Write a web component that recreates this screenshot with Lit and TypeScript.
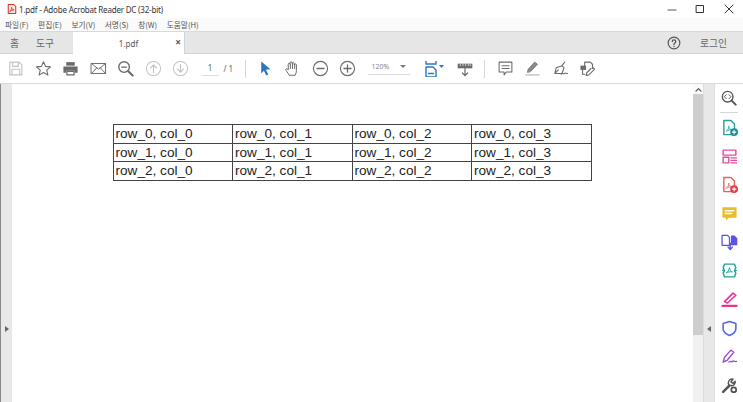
import { LitElement, html, css, svg } from 'lit';
import { customElement } from 'lit/decorators.js';

const icon = (w: number, h: number, body: unknown, vb = '0 0 24 24') => html`
    <svg width=${w} height=${h} viewBox=${vb} fill="none" stroke-linecap="round" stroke-linejoin="round">${body}</svg>
`;

const GREY = '#6b6b6b';
const PALE = '#c4c4c4';

const toolsLeft = [
    svg`<path d="M4 3h13l4 4v14H4z M8 3v6h8V3 M7 21v-8h11v8" stroke=${PALE} stroke-width="1.600"/>`,
    svg`<path d="M12 2.500l2.900 6.500 7 .7-5.300 4.700 1.600 7-6.200-3.700-6.200 3.700 1.600-7L2.100 9.700l7-.7z" stroke=${GREY} stroke-width="1.500"/>`,
    svg`<path d="M6 3h12v5H6z" fill=${GREY}/><path d="M2 9h20v9h-4v-3H6v3H2z" fill=${GREY}/><path d="M7 16h10v5H7z" stroke=${GREY} stroke-width="1.800"/>`,
    svg`<path d="M2 5h20v14H2z M2 5l10 8 10-8 M2 19l7.500-8 M22 19l-7.500-8" stroke=${GREY} stroke-width="1.400"/>`,
    svg`<circle cx="10" cy="10" r="7.500" stroke=${GREY} stroke-width="2"/><path d="M16 16l6 6" stroke=${GREY} stroke-width="3"/><path d="M6.500 10h7" stroke=${GREY} stroke-width="1.800"/>`,
    svg`<circle cx="12" cy="12" r="10" stroke=${PALE} stroke-width="1.500"/><path d="M12 18V7 M7.500 11.500L12 7l4.500 4.500" stroke=${PALE} stroke-width="1.600"/>`,
    svg`<circle cx="12" cy="12" r="10" stroke=${PALE} stroke-width="1.500"/><path d="M12 6v11 M7.500 12.500L12 17l4.500-4.500" stroke=${PALE} stroke-width="1.600"/>`,
];

const toolsNav = [
    svg`<path d="M6 2l13 11-6.500.6 3.500 7-3 1.400-3.200-7L6 19z" fill="#2d74c4"/>`,
    svg`<path d="M7 21c-1-3-5-6-4.500-8 .5-1.500 2.500-.5 3.500 1V6c0-2 2.500-2 2.500 0V4c0-2 3-2 3 0v1c0-2 3-2 3 0v2c0-2 3-2 3 0v8c0 3-1 4-1.500 6z M9 6v6 M12 5v7 M15 7v5" stroke=${GREY} stroke-width="1.400"/>`,
    svg`<circle cx="12" cy="12" r="10" stroke=${GREY} stroke-width="1.600"/><path d="M7 12h10" stroke=${GREY} stroke-width="1.800"/>`,
    svg`<circle cx="12" cy="12" r="10" stroke=${GREY} stroke-width="1.600"/><path d="M7 12h10 M12 7v10" stroke=${GREY} stroke-width="1.800"/>`,
];

const toolsMark = [
    svg`<path d="M3 3h18v14h-8l-3 4v-4H3z M7 8h10 M7 12h10" stroke=${GREY} stroke-width="1.500"/>`,
    svg`<path d="M5 17l1-4L15 3l4 3-9.500 10z" fill="#8c8c8c" stroke=${GREY} stroke-width="1.200"/><path d="M3 21h18" stroke="#cfcfcf" stroke-width="2.500"/>`,
    svg`<path d="M4 19l2-8 8-3 3 3-3 8z M4 19l5-5 M14 8l4-5 M13 20c3-3 3 1 5-1s1 1 4 0" stroke=${GREY} stroke-width="1.500"/>`,
    svg`<path d="M8 11V3h8l3 3v6 M19 10l3 3-8 8-4 1 1-4 6-6 M8 20H5v-6" stroke=${GREY} stroke-width="1.500"/><path d="M2 8h8v6H2z" fill=${GREY}/>`,
];

const doc = (c: string) => svg`<path d="M4 2h10l5 5v15H4z" stroke=${c} stroke-width="2"/><path d="M8 17c2-1 3-4 3-7 0 3 2 5 5 5-3 0-6 1-8 2z" stroke=${c} stroke-width="1.200"/>`;

const sideTools = [
    svg`${doc('#26a0a0')}<circle cx="18.500" cy="18.500" r="5.500" fill="#138f96"/><path d="M16 18.500h5 M18.500 16v5" stroke="#fff" stroke-width="1.500"/>`,
    svg`<path d="M3 3h18v7H3z M3 13h8v8H3z" stroke="#e64b9e" stroke-width="2"/><path d="M14 14h8 M14 17.500h8 M14 21h8" stroke="#e64b9e" stroke-width="1.600"/>`,
    svg`${doc('#ec5f5f')}<circle cx="18.500" cy="18.500" r="5.500" fill="#e63946"/><path d="M16 18.500h5 M18.500 16v5" stroke="#fff" stroke-width="1.500"/>`,
    svg`<path d="M2 3h20v15H11l-4 4v-4H2z" fill="#e8bd2c"/><path d="M6 8h12 M6 12h9" stroke="#fff" stroke-width="2"/>`,
    svg`<path d="M1.500 2h8l2.500 3v11H1.500z" stroke="#5a55e0" stroke-width="1.800"/><path d="M14 2h5l4 4v10H14z" fill="#5a55e0"/><path d="M13 13v8 M10 18.500l3 3.500 3-3.500" stroke="#5a55e0" stroke-width="2"/>`,
    svg`<path d="M5 3h14l2 5-2 4 2 4-2 5H5l-2-5 2-4-2-4z" stroke="#1fa39c" stroke-width="2"/><path d="M8 15c2-1 3-3 4-7 0 3 2 5 4 6-3-.5-6 0-8 1z" stroke="#1fa39c" stroke-width="1.400"/><path d="M1 12l3-2v4z M23 12l-3-2v4z" fill="#1fa39c"/>`,
    svg`<path d="M5 15L17 3l4 3-12 11z" stroke="#e6358f" stroke-width="2.200"/><path d="M2 21h20" stroke="#e6358f" stroke-width="3"/>`,
    svg`<path d="M12 2l9 3v7c0 5-4 8-9 10-5-2-9-5-9-10V5z" stroke="#5566e6" stroke-width="2.200"/>`,
    svg`<path d="M3 20l2-7 9-10 4 3-9 11z M3 20l4-2" stroke="#9b4fd8" stroke-width="2"/><path d="M11 20c3-3 3 1 5-1s2 1 6 0" stroke="#9b4fd8" stroke-width="1.800"/>`,
    svg`<path d="M3 21l9-9" stroke="#555" stroke-width="3.500"/><path d="M11 11c-2-4 1-9 6-8l-3 4 3 2 3-3c1 4-3 7-6 6" stroke="#555" stroke-width="2"/><circle cx="18" cy="18" r="3.500" stroke="#555" stroke-width="2.500"/>`,
];

const rows = [0, 1, 2];
const cols = [0, 1, 2, 3];

@customElement('app-root')
export class AppRoot extends LitElement {
    static styles = css`
        :host {
            display: flex;
            flex-direction: column;
            height: 402px;
            width: 743px;
            overflow: hidden;
            background: #fff;
            font-family: "Noto Sans CJK KR", "Noto Sans", sans-serif;
            color: #444;
        }

        svg { display: block; }

        .title {
            height: 18px;
            display: flex;
            align-items: center;
            padding-left: 7px;
            gap: 2px;
            font-family: "Noto Sans", sans-serif;
            font-size: 8px;
            letter-spacing: -0.2px;
            color: #333;
        }

        .title .name { flex: 1; }

        .winbtn {
            width: 28.500px;
            display: flex;
            justify-content: center;
        }

        .winbtns { display: flex; }

        .menu {
            height: 13px;
            background: #fafafa;
            display: flex;
            align-items: center;
            gap: 9.500px;
            padding-left: 5px;
            font-size: 7.700px;
            color: #555;
            border-bottom: 1px solid #d9d9d9;
        }

        .tabs {
            height: 21px;
            background: #e6e6e6;
            display: flex;
            align-items: stretch;
            border-bottom: 1px solid #d4d4d4;
            font-size: 9.800px;
            color: #666;
        }

        .tabs .nav {
            width: 73px;
            display: flex;
            align-items: center;
            padding-left: 10px;
            gap: 17px;
            box-sizing: border-box;
        }

        .tab {
            width: 112px;
            background: #fff;
            margin-bottom: -1px;
            display: flex;
            align-items: center;
            justify-content: center;
            position: relative;
            font-family: "Noto Sans", sans-serif;
            font-size: 8px;
            color: #555;
            border-right: 1px solid #d4d4d4;
            box-sizing: border-box;
        }

        .tab .close {
            position: absolute;
            right: 3px;
            top: 3px;
            font-size: 10px;
            font-weight: 700;
        }

        .tabs .right {
            margin-left: auto;
            display: flex;
            align-items: center;
            gap: 19px;
            padding-right: 16px;
        }

        .toolbar {
            height: 29px;
            display: flex;
            align-items: center;
            padding-left: 2px;
            border-bottom: 1px solid #dcdcdc;
        }

        .tool {
            width: 27.500px;
            display: flex;
            justify-content: center;
        }

        .tool.fit { margin-left: 11.500px; margin-right: -2px; }
        .tool.ruler { margin-left: 4.800px; }

        .page {
            width: 50px;
            display: flex;
            align-items: center;
            font-family: "Noto Sans", sans-serif;
            font-size: 8px;
            color: #666;
        }

        .page .num {
            width: 17px;
            margin-left: 7px;
            margin-right: 5px;
            text-align: center;
            border-bottom: 1px solid #ddd;
            padding-bottom: 2px;
        }

        .sep {
            width: 1px;
            height: 18px;
            background: #d6d6d6;
        }

        .sep.nav { margin: 0 6px 0 0; }
        .sep.mark { margin: 0 6px 0 5.700px; }

        .zoomval {
            width: 42px;
            margin-left: 6px;
            display: flex;
            justify-content: space-between;
            align-items: center;
            font-family: "Noto Sans", sans-serif;
            font-size: 7px;
            color: #888;
            border-bottom: 1px solid #ddd;
            padding: 0 4px 3px 4px;
            box-sizing: border-box;
        }

        .caret {
            width: 0;
            height: 0;
            border-left: 3px solid transparent;
            border-right: 3px solid transparent;
            border-top: 3px solid #777;
        }

        .body {
            flex: 1;
            display: grid;
            grid-template-columns: 12px 681px 10px 12px 28px;
            min-height: 0;
        }

        .strip {
            background: #e8e8e8;
            display: flex;
            align-items: center;
            justify-content: center;
            padding-top: 172px;
            box-sizing: border-box;
        }

        .strip.left {
            border-left: 1px solid #8a8a8a;
        }

        .strip.mid {
            border-left: 1px solid #dcdcdc;
            border-right: 1px solid #dcdcdc;
        }

        .arrow-r {
            border-left: 4px solid #666;
            border-top: 3.500px solid transparent;
            border-bottom: 3.500px solid transparent;
        }

        .arrow-l {
            border-right: 4px solid #666;
            border-top: 3.500px solid transparent;
            border-bottom: 3.500px solid transparent;
        }

        .doc {
            padding: 40px 0 0 100.500px;
            box-sizing: border-box;
        }

        table {
            border-collapse: collapse;
            table-layout: fixed;
            width: 479px;
            font-family: "Liberation Sans", Arial, sans-serif;
            font-size: 13.600px;
            color: #222;
        }

        td {
            border: 1px solid #444;
            padding: 0 0 0 2px;
            height: 17.500px;
            line-height: 17px;
            white-space: nowrap;
        }

        .scroll {
            background: #f0f0f0;
            display: flex;
            flex-direction: column;
        }

        .scroll .up {
            height: 10px;
            background: #fafafa;
            display: flex;
            align-items: center;
            justify-content: center;
        }

        .scroll .thumb {
            height: 241px;
            background: #cdcdcd;
        }

        .side {
            display: flex;
            flex-direction: column;
            align-items: center;
            padding-top: 6px;
        }

        .side .divider {
            width: 18px;
            height: 1px;
            background: #d6d6d6;
            margin: 6px 0 0;
        }

        .side .item {
            height: 28.700px;
            display: flex;
            align-items: center;
        }
    `;

    render() {
        return html`
            <div class="title">
                ${icon(10, 10, svg`<path d="M3 1h13l5 5v17H3z" fill="#fde4e0" stroke="#d8362a" stroke-width="2.500"/><path d="M7 18c3-2 4-6 4-10 0 4 3 6 6 6-4 0-7 2-10 4z" stroke="#d8362a" stroke-width="2"/>`)}
                <span class="name">1.pdf - Adobe Acrobat Reader DC (32-bit)</span>
                <div class="winbtns">
                    <div class="winbtn">${icon(10, 10, svg`<path d="M1 6h8" stroke="#555" stroke-width="1"/>`, '0 0 10 10')}</div>
                    <div class="winbtn">${icon(10, 10, svg`<path d="M1.500 1.500h7v7h-7z" stroke="#333" stroke-width="1"/>`, '0 0 10 10')}</div>
                    <div class="winbtn">${icon(10, 10, svg`<path d="M1 1l8 8 M9 1l-8 8" stroke="#333" stroke-width="1"/>`, '0 0 10 10')}</div>
                </div>
            </div>
            <div class="menu">
                <span>파일(F)</span><span>편집(E)</span><span>보기(V)</span><span>서명(S)</span><span>창(W)</span><span>도움말(H)</span>
            </div>
            <div class="tabs">
                <div class="nav"><span>홈</span><span>도구</span></div>
                <div class="tab">1.pdf<span class="close">×</span></div>
                <div class="right">
                    ${icon(14, 14, svg`<circle cx="12" cy="12" r="10" stroke="#555" stroke-width="2"/><path d="M9 9.500c0-4 6-4 6 0 0 2.500-3 2.500-3 5 M12 17.500v.5" stroke="#555" stroke-width="2.200"/>`)}
                    <span>로그인</span>
                </div>
            </div>
            <div class="toolbar">
                ${toolsLeft.map((t) => html`<div class="tool">${icon(17, 17, t)}</div>`)}
                <div class="page"><span class="num">1</span><span>/ 1</span></div>
                <div class="sep nav"></div>
                ${toolsNav.map((t) => html`<div class="tool">${icon(17, 17, t)}</div>`)}
                <div class="zoomval"><span>120%</span><span class="caret"></span></div>
                <div class="tool fit">
                    ${icon(20, 16, svg`<path d="M1 0v3h10V0 M1 16V6h7l3 3v7z M3.500 12.500h5" stroke="#2d74c4" stroke-width="1.400"/><path d="M14 4h5l-2.500 3z" fill="#2d74c4"/>`, '0 0 20 16')}
                </div>
                <div class="tool ruler">
                    ${icon(16, 16, svg`<path d="M1 4h22v7H1z" fill=${GREY}/><path d="M5 5v2 M9 5v2 M13 5v2 M17 5v2 M20 5v2" stroke="#fff" stroke-width="1"/><path d="M12 11v11 M8 18l4 4 4-4" stroke=${GREY} stroke-width="1.800"/>`)}
                </div>
                <div class="sep mark"></div>
                ${toolsMark.map((t) => html`<div class="tool">${icon(17, 17, t)}</div>`)}
            </div>
            <div class="body">
                <div class="strip left"><span class="arrow-r"></span></div>
                <div class="doc">
                    <table>
                        ${rows.map((r) => html`
                            <tr>${cols.map((c) => html`<td>row_${r}, col_${c}</td>`)}</tr>
                        `)}
                    </table>
                </div>
                <div class="scroll">
                    <div class="up">${icon(7, 5, svg`<path d="M1 5l3-3 3 3" stroke="#555" stroke-width="1.500"/>`, '0 0 8 6')}</div>
                    <div class="thumb"></div>
                </div>
                <div class="strip mid"><span class="arrow-l"></span></div>
                <div class="side">
                    ${icon(16, 16, svg`<circle cx="10" cy="10" r="8" stroke="#555" stroke-width="2"/><path d="M16 16l6 6" stroke="#555" stroke-width="3"/><path d="M8 7l-3 3 3 3 M12 7l3 3-3 3" stroke="#555" stroke-width="1.500"/>`)}
                    <div class="divider"></div>
                    ${sideTools.map((t) => html`<div class="item">${icon(17, 17, t)}</div>`)}
                </div>
            </div>
        `;
    }
}
